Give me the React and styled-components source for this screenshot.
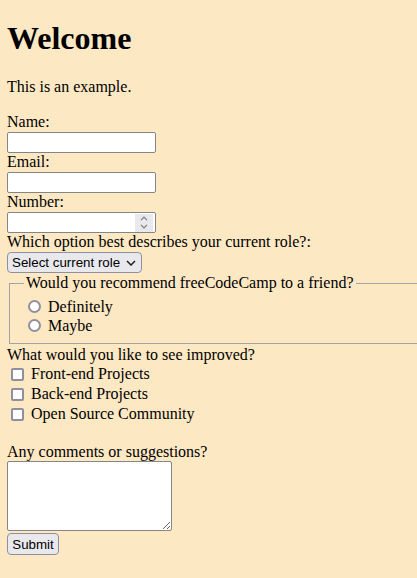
import React from 'react'
import styled, { createGlobalStyle } from 'styled-components'

const GlobalStyle = createGlobalStyle`
  body {
    margin: 0;
    background-color: #fde8c4;
    font-family: "Liberation Serif", "Times New Roman", serif;
    font-size: 16px;
    line-height: 18.4px;
    color: #000;
  }
  * {
    box-sizing: border-box;
  }
`

const Page = styled.div`
  padding: 0 8px 8px 7px;
  display: flow-root;
`

const Title = styled.h1`
  font-size: 32px;
  line-height: 36.8px;
  margin: 19.5px 0 21.7px;
`

const Intro = styled.p`
  margin: 0 0 16.6px;
`

const Form = styled.form`
  margin: 0;
`

const FieldLabel = styled.label`
  display: block;
  height: 19px;
`

const Field = styled.input`
  display: block;
  appearance: none;
  width: 149px;
  height: 21px;
  margin: 0;
  padding: 1px 3px;
  border: 1px solid #858585;
  border-radius: 2px;
  background: #fff;
  font-family: "Liberation Sans", Arial, sans-serif;
  font-size: 13.33px;

  &::-webkit-inner-spin-button,
  &::-webkit-outer-spin-button {
    -webkit-appearance: none;
    margin: 0;
  }
`

const NumberWrap = styled.div`
  position: relative;
  width: 149px;
`

const Spinner = styled.div`
  position: absolute;
  top: 2px;
  right: 3px;
  width: 18px;
  height: 18px;
  background: #e9e9ed;
  display: flex;
  flex-direction: column;
  align-items: center;
  justify-content: center;
  gap: 3px;
  pointer-events: none;
`

const SelectWrap = styled.div`
  position: relative;
  width: 135px;
`

const RoleSelect = styled.select`
  display: block;
  appearance: none;
  width: 135px;
  height: 21px;
  margin: 0;
  padding: 0 20px 0 4px;
  border: 1px solid #8f8f9d;
  border-radius: 4px;
  background: #e9e9ed;
  color: #000;
  font-family: "Liberation Sans", Arial, sans-serif;
  font-size: 13.33px;
`

const Chevron = styled.svg`
  position: absolute;
  top: 8px;
  right: 6px;
  pointer-events: none;
`

/* the box runs on past the right edge in the original, so its right side is cut off */
const Group = styled.fieldset`
  margin: 1px -8px 1.5px 2px;
  padding: 5px 14px 8px;
  border: 1px solid #a3a3a3;
  border-right: none;

  legend {
    padding: 0 2px;
    line-height: 18.4px;
  }
`

const Option = styled.label`
  display: flex;
  align-items: center;
  height: ${({ tall }) => (tall ? 20 : 19)}px;
`

const Radio = styled.input`
  appearance: none;
  width: 13px;
  height: 13px;
  margin: 0 7px 0 4px;
  border: 2px solid #8f8f9d;
  border-radius: 50%;
  background: #fff;
`

const Checkbox = styled.input`
  appearance: none;
  width: 13px;
  height: 13px;
  margin: 0 7px 0 4px;
  border: 2px solid #8f8f9d;
  border-radius: 2px;
  background: #fff;
`

const Question = styled.div`
  margin-top: ${({ gap }) => gap || 0}px;
`

const Notes = styled.textarea`
  display: block;
  width: 165px;
  height: 70px;
  margin: 0;
  border: 1px solid #858585;
  border-radius: 2px;
  background: #fff;
`

const SubmitButton = styled.button`
  display: block;
  width: 52px;
  height: 22px;
  margin-top: 2px;
  padding: 0;
  border: 1px solid #8f8f9d;
  border-radius: 4px;
  background: #e9e9ed;
  color: #000;
  font-family: "Liberation Sans", Arial, sans-serif;
  font-size: 13.33px;
`

const SpinArrow = ({ up }) => (
  <svg width="8" height="5" viewBox="0 0 8 5">
    <path
      d={up ? 'M1 4.2 L4 1.2 L7 4.2' : 'M1 0.8 L4 3.8 L7 0.8'}
      fill="none"
      stroke="#7a7a7a"
      strokeWidth="1.2"
    />
  </svg>
)

export default function App() {
  return (
    <>
      <GlobalStyle />
      <Page>
        <Title>Welcome</Title>
        <Intro>This is an example.</Intro>
        <Form onSubmit={(e) => e.preventDefault()}>
          <FieldLabel htmlFor="name">Name:</FieldLabel>
          <Field id="name" type="text" />
          <FieldLabel htmlFor="email">Email:</FieldLabel>
          <Field id="email" type="email" />
          <FieldLabel htmlFor="number">Number:</FieldLabel>
          <NumberWrap>
            <Field id="number" type="number" />
            <Spinner>
              <SpinArrow up />
              <SpinArrow />
            </Spinner>
          </NumberWrap>
          <FieldLabel htmlFor="role">Which option best describes your current role?:</FieldLabel>
          <SelectWrap>
            <RoleSelect id="role" defaultValue="">
              <option value="" disabled>Select current role</option>
              <option value="student">Student</option>
              <option value="job">Full Time Job</option>
              <option value="learner">Full Time Learner</option>
            </RoleSelect>
            <Chevron width="10" height="6" viewBox="0 0 10 6">
              <path d="M1 1 L5 5 L9 1" fill="none" stroke="#202020" strokeWidth="1.5" />
            </Chevron>
          </SelectWrap>
          <Group>
            <legend>Would you recommend freeCodeCamp to a friend?</legend>
            <Option>
              <Radio type="radio" name="recommend" value="definitely" />
              Definitely
            </Option>
            <Option>
              <Radio type="radio" name="recommend" value="maybe" />
              Maybe
            </Option>
          </Group>
          <Question>What would you like to see improved?</Question>
          <Option tall>
            <Checkbox type="checkbox" value="front-end" />
            Front-end Projects
          </Option>
          <Option tall>
            <Checkbox type="checkbox" value="back-end" />
            Back-end Projects
          </Option>
          <Option tall>
            <Checkbox type="checkbox" value="community" />
            Open Source Community
          </Option>
          <Question gap={18.4}>Any comments or suggestions?</Question>
          <Notes />
          <SubmitButton type="submit">Submit</SubmitButton>
        </Form>
      </Page>
    </>
  )
}
